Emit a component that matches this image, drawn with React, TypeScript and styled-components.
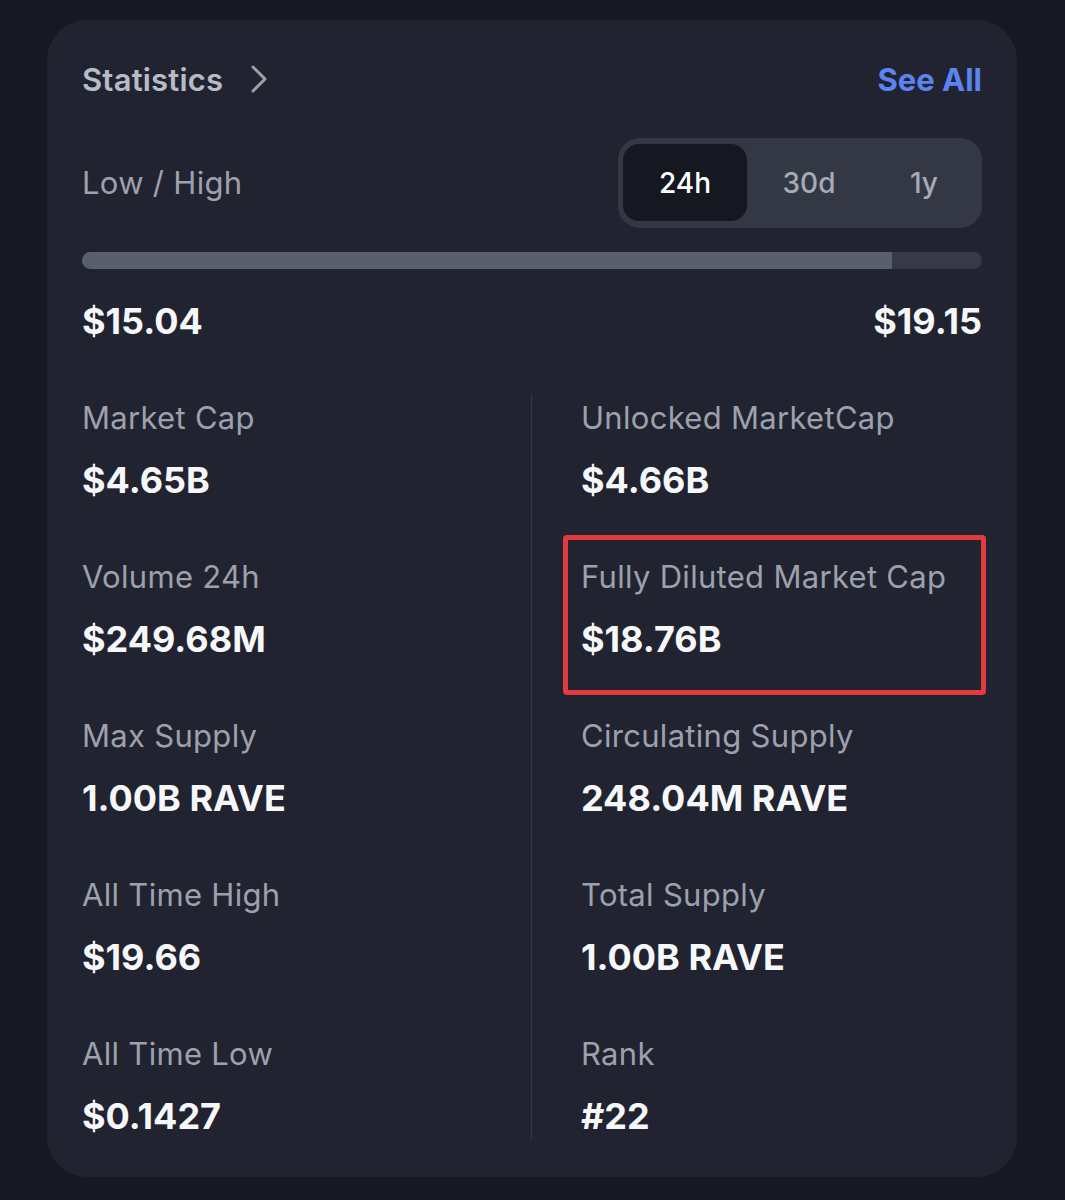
import styled, { createGlobalStyle } from 'styled-components';

const GlobalStyle = createGlobalStyle`
	html, body {
		margin: 0;
		padding: 0;
		background: #161922;
	}

	body {
		font-family: Inter, 'Noto Sans', 'Liberation Sans', sans-serif;
		-webkit-font-smoothing: antialiased;
	}
`;

const Page = styled.div`
	padding: 20px 48px 23px 47px;
`;

const Card = styled.section`
	box-sizing: border-box;
	height: 1157px;
	padding: 41px 35px 0 35px;

	display: flex;
	flex-direction: column;

	background: #212430;
	border-radius: 40px;
`;

const Header = styled.div`
	display: flex;
	align-items: center;
	justify-content: space-between;
	height: 36px;
`;

const TitleLink = styled.div`
	display: flex;
	align-items: center;
	gap: 27px;

	font-size: 31px;
	font-weight: 600;
	letter-spacing: 0.2px;
	color: #b7bbc5;
`;

const SeeAll = styled.a`
	font-size: 31px;
	font-weight: 700;
	color: #5c83f2;
	text-decoration: none;
`;

const RangeRow = styled.div`
	display: flex;
	align-items: center;
	justify-content: space-between;
	margin-top: 41px;
`;

const Label = styled.div`
	font-size: 31px;
	line-height: 36px;
	font-weight: 400;
	letter-spacing: 0.3px;
	color: #9ca1ad;
	white-space: nowrap;
`;

const Segmented = styled.div`
	box-sizing: border-box;
	width: 364px;
	height: 90px;
	padding: 6px 5px 7px 5px;

	display: flex;

	background: #343845;
	border-radius: 22px;
`;

const Segment = styled.button<{ $active?: boolean; $width: number }>`
	width: ${(p) => p.$width}px;
	height: 100%;
	padding: 0;

	border: none;
	border-radius: 16px;
	background: ${(p) => (p.$active ? '#151821' : 'transparent')};

	font-family: inherit;
	font-size: 28px;
	font-weight: 500;
	color: ${(p) => (p.$active ? '#ffffff' : '#a6abb6')};
`;

const Track = styled.div`
	margin-top: 24px;
	height: 17px;
	border-radius: 9px;
	background: #353948;
	overflow: hidden;
`;

const Fill = styled.div`
	height: 100%;
	background: #5a5f6e;
`;

const PriceRow = styled.div`
	display: flex;
	justify-content: space-between;
	margin-top: 30px;
`;

const Value = styled.div`
	font-size: 36px;
	line-height: 44px;
	font-weight: 700;
	color: #f6f7f9;
	white-space: nowrap;
`;

const StatsGrid = styled.div`
	display: flex;
	margin-top: 52px;
`;

const Column = styled.div<{ $divided?: boolean }>`
	box-sizing: border-box;
	width: ${(p) => (p.$divided ? '451px' : '449px')};
	padding: 5px 0 2px ${(p) => (p.$divided ? '49px' : '0')};

	display: flex;
	flex-direction: column;
	gap: 57px;

	border-left: ${(p) => (p.$divided ? '1px solid #343846' : 'none')};
`;

const Stat = styled.div<{ $highlighted?: boolean }>`
	position: relative;
	display: flex;
	flex-direction: column;
	gap: 22px;

	&::after {
		content: '';
		display: ${(p) => (p.$highlighted ? 'block' : 'none')};
		position: absolute;
		left: -18px;
		right: -4px;
		top: -24px;
		bottom: -34px;
		border: 5px solid #e23a3f;
		border-radius: 4px;
		pointer-events: none;
	}
`;

const Chevron = () => (
	<svg width="18" height="28" viewBox="0 0 18 28" fill="none">
		<polyline
			points="3,2 15,14 3,26"
			stroke="#9ca1ad"
			strokeWidth="3"
			strokeLinecap="round"
			strokeLinejoin="round"
		/>
	</svg>
);

const left = [
	{ label: 'Market Cap', value: '$4.65B' },
	{ label: 'Volume 24h', value: '$249.68M' },
	{ label: 'Max Supply', value: '1.00B RAVE' },
	{ label: 'All Time High', value: '$19.66' },
	{ label: 'All Time Low', value: '$0.1427' },
];

const right = [
	{ label: 'Unlocked MarketCap', value: '$4.66B' },
	{ label: 'Fully Diluted Market Cap', value: '$18.76B', highlighted: true },
	{ label: 'Circulating Supply', value: '248.04M RAVE' },
	{ label: 'Total Supply', value: '1.00B RAVE' },
	{ label: 'Rank', value: '#22' },
];

const low = 15.04;
const high = 19.15;
const progress = 0.9;

const App = () => {
	return (
		<>
			<GlobalStyle />
			<Page>
				<Card>
					<Header>
						<TitleLink>
							Statistics
							<Chevron />
						</TitleLink>
						<SeeAll href="#">See All</SeeAll>
					</Header>

					<RangeRow>
						<Label>Low / High</Label>
						<Segmented>
							<Segment $active $width={124}>
								24h
							</Segment>
							<Segment $width={124}>30d</Segment>
							<Segment $width={106}>1y</Segment>
						</Segmented>
					</RangeRow>

					<Track>
						<Fill style={{ width: `${progress * 100}%` }} />
					</Track>

					<PriceRow>
						<Value>${low.toFixed(2)}</Value>
						<Value>${high.toFixed(2)}</Value>
					</PriceRow>

					<StatsGrid>
						<Column>
							{left.map((s) => (
								<Stat key={s.label}>
									<Label>{s.label}</Label>
									<Value>{s.value}</Value>
								</Stat>
							))}
						</Column>
						<Column $divided>
							{right.map((s) => (
								<Stat key={s.label} $highlighted={s.highlighted}>
									<Label>{s.label}</Label>
									<Value>{s.value}</Value>
								</Stat>
							))}
						</Column>
					</StatsGrid>
				</Card>
			</Page>
		</>
	);
};

export default App;
